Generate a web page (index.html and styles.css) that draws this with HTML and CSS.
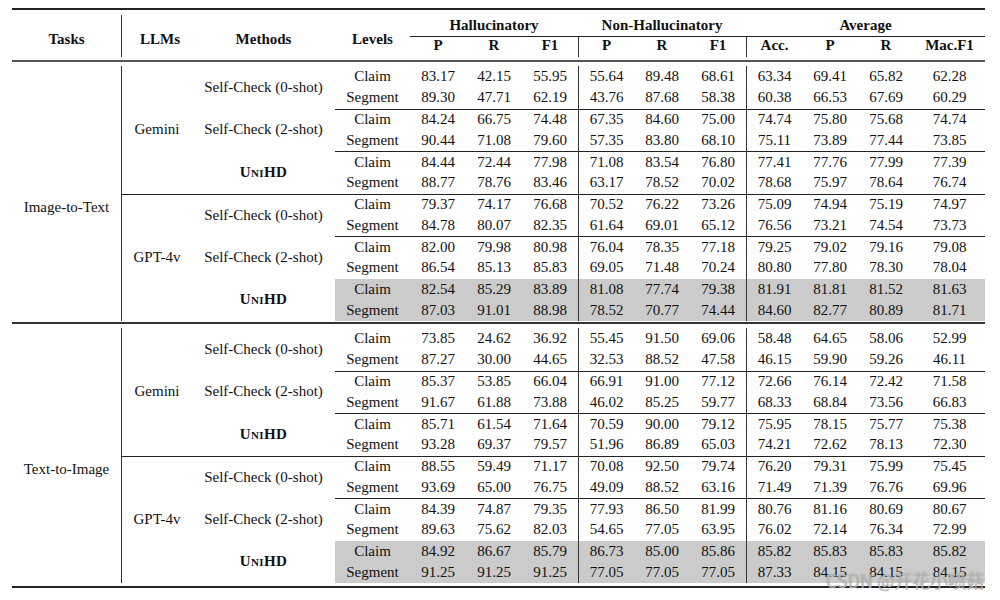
FILE: index.html
```html
<!DOCTYPE html>
<html lang="en">
<head>
<meta charset="utf-8">
<title>Results</title>
<link rel="stylesheet" href="styles.css">
</head>
<body>
<table class="res">
  <colgroup>
    <col class="w-task"><col class="w-llm"><col class="w-meth"><col class="w-lvl">
    <col class="w-num" span="9"><col class="w-mac">
  </colgroup>
  <thead>
    <tr class="rule-top"><td colspan="14"></td></tr>
    <tr class="h1">
      <th rowspan="2" class="hs">Tasks</th>
      <th rowspan="2" class="hs llm-h">LLMs</th>
      <th rowspan="2" class="hs">Methods</th>
      <th rowspan="2" class="hs">Levels</th>
      <th colspan="3" class="grp">Hallucinatory</th>
      <th colspan="3" class="grp">Non-Hallucinatory</th>
      <th colspan="4" class="grp">Average</th>
    </tr>
    <tr class="h2">
      <th>P</th><th>R</th><th>F1</th>
      <th class="vl">P</th><th>R</th><th>F1</th>
      <th class="vl">Acc.</th><th>P</th><th>R</th><th>Mac.F1</th>
    </tr>
    <tr class="rule-mid"><td colspan="14"></td></tr>
    <tr class="gap"><td colspan="14"></td></tr>
  </thead>
  <tbody>
    <tr class="r">
      <td rowspan="12" class="task">Image-to-Text</td>
      <td rowspan="6" class="llm">Gemini</td>
      <td rowspan="2" class="meth">Self-Check (0-shot)</td>
      <td>Claim</td><td>83.17</td><td>42.15</td><td>55.95</td><td class="vl">55.64</td><td>89.48</td><td>68.61</td><td class="vl">63.34</td><td>69.41</td><td>65.82</td><td>62.28</td>
    </tr>
    <tr class="r">
      <td>Segment</td><td>89.30</td><td>47.71</td><td>62.19</td><td class="vl">43.76</td><td>87.68</td><td>58.38</td><td class="vl">60.38</td><td>66.53</td><td>67.69</td><td>60.29</td>
    </tr>
    <tr class="r g">
      <td rowspan="2" class="meth">Self-Check (2-shot)</td>
      <td>Claim</td><td>84.24</td><td>66.75</td><td>74.48</td><td class="vl">67.35</td><td>84.60</td><td>75.00</td><td class="vl">74.74</td><td>75.80</td><td>75.68</td><td>74.74</td>
    </tr>
    <tr class="r">
      <td>Segment</td><td>90.44</td><td>71.08</td><td>79.60</td><td class="vl">57.35</td><td>83.80</td><td>68.10</td><td class="vl">75.11</td><td>73.89</td><td>77.44</td><td>73.85</td>
    </tr>
    <tr class="r g">
      <td rowspan="2" class="meth"><span class="uni">UniHD</span></td>
      <td>Claim</td><td>84.44</td><td>72.44</td><td>77.98</td><td class="vl">71.08</td><td>83.54</td><td>76.80</td><td class="vl">77.41</td><td>77.76</td><td>77.99</td><td>77.39</td>
    </tr>
    <tr class="r">
      <td>Segment</td><td>88.77</td><td>78.76</td><td>83.46</td><td class="vl">63.17</td><td>78.52</td><td>70.02</td><td class="vl">78.68</td><td>75.97</td><td>78.64</td><td>76.74</td>
    </tr>
    <tr class="r m">
      <td rowspan="6" class="llm">GPT-4v</td>
      <td rowspan="2" class="meth">Self-Check (0-shot)</td>
      <td>Claim</td><td>79.37</td><td>74.17</td><td>76.68</td><td class="vl">70.52</td><td>76.22</td><td>73.26</td><td class="vl">75.09</td><td>74.94</td><td>75.19</td><td>74.97</td>
    </tr>
    <tr class="r">
      <td>Segment</td><td>84.78</td><td>80.07</td><td>82.35</td><td class="vl">61.64</td><td>69.01</td><td>65.12</td><td class="vl">76.56</td><td>73.21</td><td>74.54</td><td>73.73</td>
    </tr>
    <tr class="r g">
      <td rowspan="2" class="meth">Self-Check (2-shot)</td>
      <td>Claim</td><td>82.00</td><td>79.98</td><td>80.98</td><td class="vl">76.04</td><td>78.35</td><td>77.18</td><td class="vl">79.25</td><td>79.02</td><td>79.16</td><td>79.08</td>
    </tr>
    <tr class="r">
      <td>Segment</td><td>86.54</td><td>85.13</td><td>85.83</td><td class="vl">69.05</td><td>71.48</td><td>70.24</td><td class="vl">80.80</td><td>77.80</td><td>78.30</td><td>78.04</td>
    </tr>
    <tr class="r sh">
      <td rowspan="2" class="meth"><span class="uni">UniHD</span></td>
      <td>Claim</td><td>82.54</td><td>85.29</td><td>83.89</td><td class="vl">81.08</td><td>77.74</td><td>79.38</td><td class="vl">81.91</td><td>81.81</td><td>81.52</td><td>81.63</td>
    </tr>
    <tr class="r sh">
      <td>Segment</td><td>87.03</td><td>91.01</td><td>88.98</td><td class="vl">78.52</td><td>70.77</td><td>74.44</td><td class="vl">84.60</td><td>82.77</td><td>80.89</td><td>81.71</td>
    </tr>

    <tr class="rule-sep"><td colspan="14"></td></tr>
    <tr class="gap"><td colspan="14"></td></tr>

    <tr class="r">
      <td rowspan="12" class="task">Text-to-Image</td>
      <td rowspan="6" class="llm">Gemini</td>
      <td rowspan="2" class="meth">Self-Check (0-shot)</td>
      <td>Claim</td><td>73.85</td><td>24.62</td><td>36.92</td><td class="vl">55.45</td><td>91.50</td><td>69.06</td><td class="vl">58.48</td><td>64.65</td><td>58.06</td><td>52.99</td>
    </tr>
    <tr class="r">
      <td>Segment</td><td>87.27</td><td>30.00</td><td>44.65</td><td class="vl">32.53</td><td>88.52</td><td>47.58</td><td class="vl">46.15</td><td>59.90</td><td>59.26</td><td>46.11</td>
    </tr>
    <tr class="r g">
      <td rowspan="2" class="meth">Self-Check (2-shot)</td>
      <td>Claim</td><td>85.37</td><td>53.85</td><td>66.04</td><td class="vl">66.91</td><td>91.00</td><td>77.12</td><td class="vl">72.66</td><td>76.14</td><td>72.42</td><td>71.58</td>
    </tr>
    <tr class="r">
      <td>Segment</td><td>91.67</td><td>61.88</td><td>73.88</td><td class="vl">46.02</td><td>85.25</td><td>59.77</td><td class="vl">68.33</td><td>68.84</td><td>73.56</td><td>66.83</td>
    </tr>
    <tr class="r g">
      <td rowspan="2" class="meth"><span class="uni">UniHD</span></td>
      <td>Claim</td><td>85.71</td><td>61.54</td><td>71.64</td><td class="vl">70.59</td><td>90.00</td><td>79.12</td><td class="vl">75.95</td><td>78.15</td><td>75.77</td><td>75.38</td>
    </tr>
    <tr class="r">
      <td>Segment</td><td>93.28</td><td>69.37</td><td>79.57</td><td class="vl">51.96</td><td>86.89</td><td>65.03</td><td class="vl">74.21</td><td>72.62</td><td>78.13</td><td>72.30</td>
    </tr>
    <tr class="r m">
      <td rowspan="6" class="llm">GPT-4v</td>
      <td rowspan="2" class="meth">Self-Check (0-shot)</td>
      <td>Claim</td><td>88.55</td><td>59.49</td><td>71.17</td><td class="vl">70.08</td><td>92.50</td><td>79.74</td><td class="vl">76.20</td><td>79.31</td><td>75.99</td><td>75.45</td>
    </tr>
    <tr class="r">
      <td>Segment</td><td>93.69</td><td>65.00</td><td>76.75</td><td class="vl">49.09</td><td>88.52</td><td>63.16</td><td class="vl">71.49</td><td>71.39</td><td>76.76</td><td>69.96</td>
    </tr>
    <tr class="r g">
      <td rowspan="2" class="meth">Self-Check (2-shot)</td>
      <td>Claim</td><td>84.39</td><td>74.87</td><td>79.35</td><td class="vl">77.93</td><td>86.50</td><td>81.99</td><td class="vl">80.76</td><td>81.16</td><td>80.69</td><td>80.67</td>
    </tr>
    <tr class="r">
      <td>Segment</td><td>89.63</td><td>75.62</td><td>82.03</td><td class="vl">54.65</td><td>77.05</td><td>63.95</td><td class="vl">76.02</td><td>72.14</td><td>76.34</td><td>72.99</td>
    </tr>
    <tr class="r sh">
      <td rowspan="2" class="meth"><span class="uni">UniHD</span></td>
      <td>Claim</td><td>84.92</td><td>86.67</td><td>85.79</td><td class="vl">86.73</td><td>85.00</td><td>85.86</td><td class="vl">85.82</td><td>85.83</td><td>85.83</td><td>85.82</td>
    </tr>
    <tr class="r sh">
      <td>Segment</td><td>91.25</td><td>91.25</td><td>91.25</td><td class="vl">77.05</td><td>77.05</td><td>77.05</td><td class="vl">87.33</td><td>84.15</td><td>84.15</td><td>84.15</td>
    </tr>
    <tr class="rule-bottom"><td colspan="14"></td></tr>
  </tbody>
</table>
<div class="wm">CSDN @开花小喷菇</div>
</body>
</html>
```

FILE: styles.css
```css
html, body {
  margin: 0;
  padding: 0;
  background: #ffffff;
}

body {
  font-family: "Liberation Serif", "Times New Roman", serif;
  font-size: 15px;
  color: #111111;
}

.res {
  margin: 8px 0 0 12px;
  width: 973px;
  table-layout: fixed;
  border-collapse: separate;
  border-spacing: 0;
}

.w-task { width: 109px; }
.w-llm  { width: 71px; }
.w-meth { width: 143px; }
.w-lvl  { width: 75px; }
.w-num  { width: 56px; }
.w-mac  { width: 71px; }

.res th,
.res td {
  padding: 0;
  line-height: 17px;
  text-align: center;
  white-space: nowrap;
  vertical-align: middle;
}

.res th {
  font-weight: bold;
}

/* booktabs-like rules */
.rule-top { height: 7px; }
.rule-top td { border-top: 2px solid #222222; }

.rule-mid { height: 5px; }
.rule-mid td { border-bottom: 2px solid #555555; }

.gap { height: 4px; }

.rule-sep { height: 3px; }
.rule-sep td { border-bottom: 2px solid #333333; }

.rule-bottom { height: 5px; }
.rule-bottom td { border-bottom: 2px solid #222222; }

/* header */
.h1 { height: 22px; }
.h1 .grp { border-bottom: 1px solid #222222; }

.res .h1 .hs {
  padding-top: 7px;
}

.res .h1 .llm-h {
  border-left: 1px solid #333333;
  padding-left: 6px;
}

.h2 { height: 20px; }
.res .h2 th { vertical-align: top; }

/* body */
.r { height: 21.25px; }

.res td.task {
  padding-top: 27px;
}

.res td.llm {
  border-left: 1px solid #333333;
}

.res .vl {
  border-left: 1px solid #333333;
}

.res .g td:not(.meth) { border-top: 1px solid #222222; }
.res .m td { border-top: 1px solid #222222; }

.res .sh td:not(.meth) { background: #cbcbcb; }

.uni {
  font-weight: bold;
  font-variant: small-caps;
  letter-spacing: 0.4px;
}

/* watermark overlay */
.wm {
  position: absolute;
  left: 826px;
  top: 569px;
  font-family: "Noto Sans CJK SC", "Noto Sans", sans-serif;
  font-size: 18px;
  line-height: 22px;
  color: rgba(255, 255, 255, 0.5);
  text-shadow: 0 0 1px rgba(90, 90, 90, 0.9);
  white-space: nowrap;
}
```
